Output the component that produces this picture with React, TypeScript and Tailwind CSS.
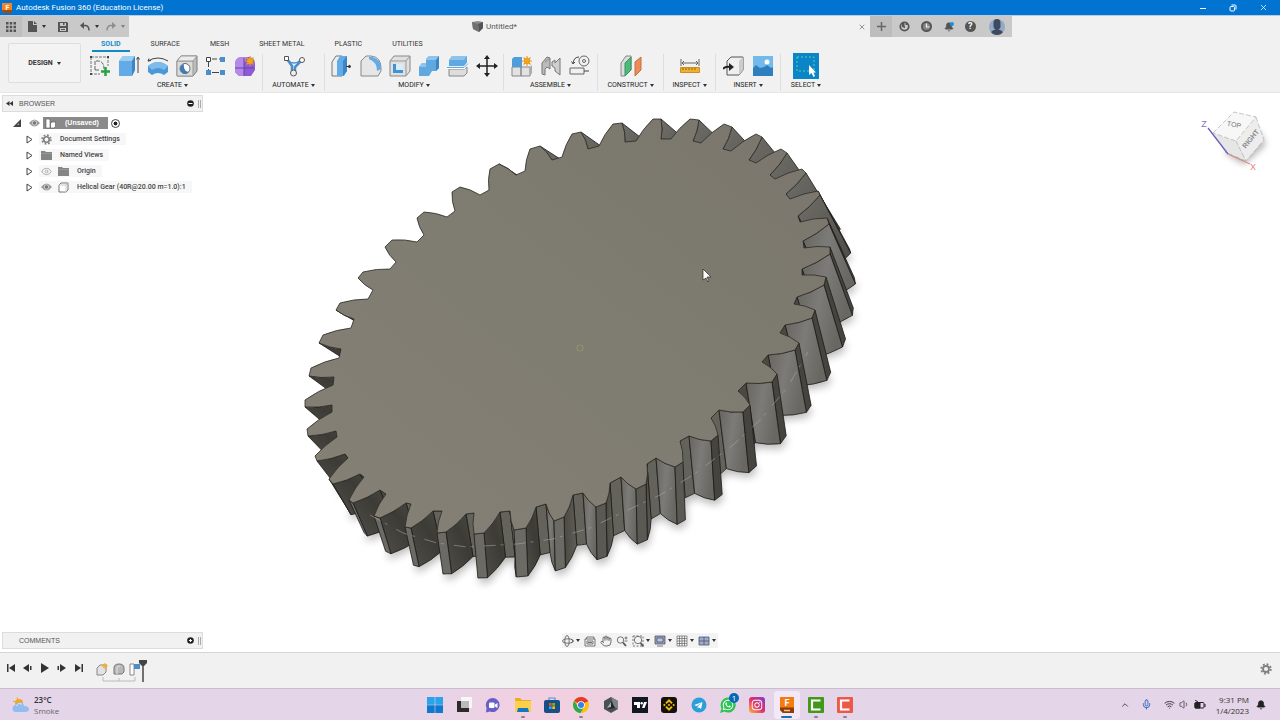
import type { ReactNode } from "react";
import { Bell, ChevronUp, Eye, Hand, Mic, Volume1, Wifi, X } from "lucide-react";
import { FaInstagram, FaTelegramPlane, FaWhatsapp } from "react-icons/fa";
import { SiBinance } from "react-icons/si";

type Pt = [number, number];

// Outline of the gear's top face, clockwise.
// Each tooth: tip start, tip end, root start, root end.
const TEETH: number[][] = [
  [319, 343, 323, 335, 351, 328, 354, 319],
  [336, 310, 340, 303, 368, 299, 373, 290],
  [358, 278, 363, 272, 390, 269, 396, 262],
  [385, 247, 392, 240, 417, 242, 424, 235],
  [417, 218, 424, 212, 447, 217, 455, 211],
  [452, 192, 460, 187, 480, 195, 489, 190],
  [490, 169, 499, 164, 516, 175, 525, 171],
  [530, 149, 540, 146, 552, 160, 562, 157],
  [572, 134, 581, 132, 588, 149, 599, 146],
  [613, 124, 622, 123, 625, 142, 636, 141],
  [653, 119, 661, 119, 661, 139, 671, 139],
  [690, 119, 699, 120, 693, 141, 701, 143],
  [724, 124, 732, 127, 723, 149, 731, 151],
  [756, 134, 762, 137, 749, 160, 756, 163],
  [781, 149, 787, 153, 770, 175, 775, 179],
  [802, 169, 806, 173, 786, 194, 790, 199],
  [818, 191, 820, 195, 798, 216, 800, 222],
  [827, 218, 829, 224, 803, 241, 804, 248],
  [830, 247, 830, 254, 802, 269, 802, 275],
  [826, 277, 824, 285, 797, 297, 794, 304],
  [815, 310, 812, 318, 785, 325, 780, 333],
  [799, 343, 795, 350, 768, 355, 762, 362],
  [777, 374, 772, 382, 746, 383, 738, 391],
  [750, 405, 743, 412, 719, 410, 711, 418],
  [718, 435, 711, 441, 689, 436, 680, 441],
  [683, 462, 675, 467, 656, 458, 647, 464],
  [646, 484, 636, 489, 621, 477, 610, 483],
  [606, 503, 596, 507, 583, 493, 573, 495],
  [564, 517, 554, 521, 546, 504, 536, 507],
  [526, 528, 514, 530, 510, 511, 500, 512],
  [484, 533, 474, 534, 474, 513, 466, 514],
  [446, 532, 437, 533, 442, 511, 433, 511],
  [411, 528, 405, 527, 411, 504, 406, 503],
  [380, 518, 374, 516, 386, 494, 380, 490],
  [353, 503, 349, 500, 364, 477, 360, 474],
  [333, 484, 329, 479, 348, 458, 345, 454],
  [317, 461, 315, 456, 337, 437, 336, 431],
  [308, 436, 307, 429, 332, 412, 332, 405],
  [305, 407, 305, 400, 333, 385, 334, 377],
  [309, 376, 311, 368, 339, 358, 341, 349],
];

// Where a point of the top face lands on the bottom face.
const lower = ([x, y]: Pt): Pt => [
  x + 100.2 - 0.053 * x - 0.1333 * y,
  y - 15.3 + 0.08 * x + 0.04 * y,
];

const at = ([x, y]: Pt) => `${x.toFixed(1)} ${y.toFixed(1)}`;

const KINDS = ["tip", "out", "root", "in"] as const;

const points: Pt[] = TEETH.flatMap((t) => [
  [t[0], t[1]] as Pt,
  [t[2], t[3]] as Pt,
  [t[4], t[5]] as Pt,
  [t[6], t[7]] as Pt,
]);

const edges = points.map((a, i) => {
  const b = points[(i + 1) % points.length];
  const kind = KINDS[i % 4];
  const dx = b[0] - a[0];
  const dy = b[1] - a[1];
  const len = Math.hypot(dx, dy) || 1;
  const bulge = kind === "in" || kind === "out" ? 2 : 0;
  const mid: Pt = [(a[0] + b[0]) / 2, (a[1] + b[1]) / 2];
  const ctrl: Pt = [mid[0] + (dy / len) * bulge, mid[1] - (dx / len) * bulge];
  const low = lower(mid);
  const facing = (low[0] - mid[0]) * dy - (low[1] - mid[1]) * dx;
  return { a, b, ctrl, kind, mid, facing };
});

const facePath =
  `M${at(edges[0].a)}` + edges.map((e) => `Q${at(e.ctrl)} ${at(e.b)}`).join("") + "Z";
const shadowPath =
  `M${at(lower(edges[0].a))}` + edges.map((e) => `L${at(lower(e.b))}`).join("") + "Z";

// far walls first
const walls = edges
  .filter((e) => e.facing > 0)
  .sort((p, q) => p.mid[0] * 0.27 + p.mid[1] * 0.96 - (q.mid[0] * 0.27 + q.mid[1] * 0.96));

function wallFill(kind: string, [x, y]: Pt) {
  if (kind === "in") return x > 560 ? "url(#flankMid)" : "url(#flankDark)";
  if (kind === "out") return y < 215 ? "url(#flankBack)" : "url(#flankLight)";
  if (kind === "tip") return x > 690 ? "#45443e" : x > 590 ? "#5a5953" : "#6b6a64";
  return x > 740 || x < 400 ? "#4b4a42" : "#63625b";
}

function Gear() {
  return (
    <svg
      viewBox="0 93 1280 559"
      className="absolute inset-0 h-full w-full"
      role="img"
      aria-label="Helical gear model"
    >
      <defs>
        <linearGradient id="flankDark" x1="0" y1="1" x2="1" y2="0">
          <stop offset="0" stopColor="#4f4e48" />
          <stop offset="0.6" stopColor="#3c3b35" />
          <stop offset="1" stopColor="#4a4942" />
        </linearGradient>
        <linearGradient id="flankMid" x1="0" y1="0" x2="1" y2="0">
          <stop offset="0" stopColor="#4a4942" />
          <stop offset="1" stopColor="#5e5d57" />
        </linearGradient>
        <linearGradient id="flankBack" x1="0" y1="0" x2="1" y2="1">
          <stop offset="0" stopColor="#6e6d67" />
          <stop offset="1" stopColor="#4b4a44" />
        </linearGradient>
        <linearGradient id="flankLight" x1="0" y1="0" x2="1" y2="0.3">
          <stop offset="0" stopColor="#666560" />
          <stop offset="0.5" stopColor="#7c7b77" />
          <stop offset="1" stopColor="#686762" />
        </linearGradient>
        <linearGradient id="face" x1="1" y1="0" x2="0" y2="1">
          <stop offset="0" stopColor="#7a766d" />
          <stop offset="0.5" stopColor="#7f7c71" />
          <stop offset="1" stopColor="#868075" />
        </linearGradient>
        <filter id="soft">
          <feGaussianBlur stdDeviation="4" />
        </filter>
      </defs>
      <path d={shadowPath} fill="#000" opacity="0.28" transform="translate(1 5)" filter="url(#soft)" />
      {walls.map(({ a, b, ctrl, kind, mid }, i) => (
        <path
          key={i}
          d={`M${at(a)}Q${at(ctrl)} ${at(b)}L${at(lower(b))}Q${at(lower(ctrl))} ${at(lower(a))}Z`}
          fill={wallFill(kind, mid)}
          stroke="#1c1b18"
          strokeWidth="0.8"
          strokeLinejoin="round"
        />
      ))}
      <path
        d="M370 515L403 533L437 543L467 547L517 544L553 539L590 528L613 517L660 495L693 475L733 445L760 420L787 388L808 352"
        fill="none"
        stroke="#b5b4aa"
        strokeWidth="0.7"
        strokeDasharray="12 5 3 10"
        opacity="0.7"
      />
      <path d={facePath} fill="url(#face)" stroke="#2a2925" strokeWidth="0.8" />
      <circle cx="580" cy="348" r="3" fill="none" stroke="#969067" strokeWidth="1.2" />
      <path d="M703 269v11l3-2 2 4 1-1-2-4h4z" fill="#fff" stroke="#222" strokeWidth="0.7" />
    </svg>
  );
}

function ViewCube() {
  return (
    <svg viewBox="0 0 72 72" className="mt-[10px] mr-2 h-[72px] w-[72px]" role="img" aria-label="View cube">
      <defs>
        <filter id="cubeSoft" x="-30%" y="-30%" width="160%" height="160%">
          <feGaussianBlur stdDeviation="3" />
        </filter>
      </defs>
      <path d="M24 50L44 62L66 42L60 28z" fill="#777" opacity="0.5" filter="url(#cubeSoft)" />
      <path d="M13 30L34 9L56 14L36 38z" fill="#f7f7f7" />
      <path d="M36 38L56 14L64 37L46 58z" fill="#ededed" />
      <path d="M13 30L36 38L46 58L25 49z" fill="#e6e6e6" />
      <path
        d="M13 30L34 9L56 14L36 38zM56 14L64 37L46 58L36 38M46 58L25 49"
        fill="none"
        stroke="#b0b0b0"
        strokeWidth="0.7"
        strokeDasharray="5 2"
      />
      <path d="M8 25L28 51" stroke="#6660bd" strokeWidth="1.3" />
      <path d="M28 51L50 61" stroke="#dc7d7d" strokeWidth="1" />
      <g fontFamily="Liberation Sans, sans-serif" textAnchor="middle">
        <text x="34" y="24" fontSize="7" fill="#777" transform="rotate(10 34 22)">TOP</text>
        <text x="51" y="38" fontSize="7" fontWeight="700" fill="#888" transform="rotate(-50 51 36)">RIGHT</text>
        <text x="4" y="24" fontSize="9" fill="#7a76c8">Z</text>
        <text x="53" y="67" fontSize="9" fill="#e77f86">X</text>
      </g>
    </svg>
  );
}

function ToolIcon({ children }: { children: ReactNode }) {
  return (
    <svg viewBox="0 0 22 22" className="h-[22px] w-[22px]" fill="none" aria-hidden="true">
      {children}
    </svg>
  );
}

const Burst = ({ x, y }: { x: number; y: number }) => (
  <g stroke="#e89b1c" strokeWidth="1.2">
    <path d={`M${x - 5} ${y}h10M${x} ${y - 5}v10M${x - 3.5} ${y - 3.5}l7 7M${x + 3.5} ${y - 3.5}l-7 7`} />
    <circle cx={x} cy={y} r="2.5" fill="#f4a71d" />
  </g>
);

const CREATE = [
  {
    name: "Create Sketch",
    art: (
      <>
        <path d="M2 2h17v9M2 2v17h9" stroke="#777" strokeDasharray="3 1" />
        <path d="M6 15V6h4q5 1 5 8M6 15h4" stroke="#666" strokeDasharray="4 1" />
        <path d="M1 1h2v2H1zM18 1h2v2h-2zM1 18h2v2H1z" fill="#444" />
        <path d="M16.5 12v9M12 16.5h9" stroke="#27a344" strokeWidth="2.5" />
      </>
    ),
  },
  {
    name: "Extrude",
    art: (
      <>
        <path d="M1 6l4-5h12v14l-3 6H1z" fill="#62abe6" />
        <path d="M1 6l4-5h12l-3 5z" fill="#9bcdf3" />
        <path d="M14 6l3-5v14l-3 6z" fill="#3c85c6" />
        <path d="M20 3v15M18.5 4.5L20 2l1.5 2.5" stroke="#444" />
      </>
    ),
  },
  {
    name: "Revolve",
    art: (
      <>
        <path d="M1 11q10-8 20 0v6l-4 3q-6-4-12 0l-4-3z" fill="#4a98d8" />
        <path d="M1 11q10-8 20 0l-4 4q-6-4-12 0z" fill="#7dbbea" />
        <path d="M1 6q10-6 20 0M1 6l3-.5M1 6l1-2.5" stroke="#444" />
      </>
    ),
  },
  {
    name: "Hole",
    art: (
      <>
        <path d="M1 6l4-5h16v15l-4 5H1z" fill="#bdbdbd" stroke="#7d7d7d" />
        <path d="M1 6h16v15H1z" fill="#dcdcdc" stroke="#999" />
        <path d="M1 6l4-5h16l-4 5z" fill="#ececec" stroke="#999" />
        <circle cx="9" cy="13.5" r="5" fill="#fff" stroke="#666" />
        <path d="M8 9a5 5 0 105 8q-6-1-5-8" fill="#3c7fb8" />
      </>
    ),
  },
  {
    name: "Pattern",
    art: (
      <>
        <path d="M7 4h8M3.5 7v8" stroke="#444" strokeDasharray="5 2" />
        <path d="M1.5 2.5h4v4h-4z" fill="#fff" stroke="#444" />
        <path d="M15 2h5v5h-5zM1 15h5v5H1zM15 15h5v5h-5z" fill="#4a8fc9" />
        <path d="M7 17.5h7" stroke="#444" />
      </>
    ),
  },
  {
    name: "Create Form",
    art: (
      <>
        <path d="M1 9q0-6 6-7h8q6 1 6 7v6l-4 6H5l-4-4z" fill="#8d5bd6" />
        <path d="M1 9q0-6 6-7h6l-3 6v13H5l-4-4z" fill="#b48ae8" />
        <path d="M10 3v18M1 13h19" stroke="#6c3fb0" />
        <Burst x={16} y={6} />
      </>
    ),
  },
];

const AUTOMATE = [
  {
    name: "Automate",
    art: (
      <>
        <path d="M4 4l5 7v5M18 6l-6 6v4" stroke="#4a8fc9" strokeWidth="2.5" />
        <path d="M4 5q7 6 14 0" stroke="#4a8fc9" strokeWidth="1.5" />
        <path d="M1.5 1.5h4v4h-4z" fill="#fff" stroke="#555" />
        <circle cx="19" cy="5" r="2.5" fill="#fff" stroke="#555" />
        <circle cx="10.5" cy="18" r="3" fill="#eee" stroke="#555" />
      </>
    ),
  },
];

const MODIFY = [
  {
    name: "Press Pull",
    art: (
      <>
        <path d="M1 7l4-6h6v20H1z" fill="#eee" stroke="#777" />
        <path d="M6 6l3-5h7v15l-3 5H6z" fill="#62abe6" />
        <path d="M12 6l4-5v15l-4 5z" fill="#3c85c6" />
        <path d="M15 11.5h4M18 10l2 1.5-2 1.5z" stroke="#333" />
      </>
    ),
  },
  {
    name: "Fillet",
    art: (
      <>
        <path d="M1 6l5-5h5q10 1 10 12v3l-3 5H1z" fill="#e6e6e6" stroke="#888" />
        <path d="M9 2h3q9 2 9 12l-4 2Q17 7 9 4z" fill="#62abe6" />
      </>
    ),
  },
  {
    name: "Shell",
    art: (
      <>
        <path d="M1 6l4-5h16v15l-4 5H1z" fill="#e0e0e0" stroke="#888" />
        <path d="M1 6h16v15M17 6l4-5" stroke="#999" />
        <path d="M4 9h10v9H4z" fill="#3f93d6" />
        <path d="M7 9h7v6H7z" fill="#d9ecfa" />
      </>
    ),
  },
  {
    name: "Combine",
    art: (
      <>
        <path d="M8 4l3-3h10v12l-3 3h-4l-3 5H1v-9l3-4h4z" fill="#5fa8e0" />
        <path d="M8 4l3-3h10l-3 4H8zM1 12l3-4h4v4z" fill="#8cc4ee" />
        <path d="M18 5l3-4v12l-3 3z" fill="#3c85c6" />
      </>
    ),
  },
  {
    name: "Split Body",
    art: (
      <>
        <path d="M2 5l3-4h15v7l-3 3H2z" fill="#5fa8e0" />
        <path d="M2 5l3-4h15l-3 4z" fill="#8cc4ee" />
        <path d="M2 14h15l3-2v6l-3 3H2z" fill="#ddd" stroke="#888" />
        <path d="M0 13h17l4-5" stroke="#fff" strokeWidth="2" />
        <path d="M0 12.5h17l4-4" stroke="#5fa8e0" />
      </>
    ),
  },
  {
    name: "Move",
    art: (
      <>
        <path d="M11 3v16M3 11h16" stroke="#222" strokeWidth="1.5" />
        <path d="M11 0l3 4H8zM11 22l3-4H8zM0 11l4-3v6zM22 11l-4-3v6z" fill="#222" />
      </>
    ),
  },
];

const ASSEMBLE = [
  {
    name: "New Component",
    art: (
      <>
        <path d="M1 12h9v9H1zM10 12h9v9h-9z" fill="#e2e2e2" stroke="#888" />
        <path d="M1 4l2-2h8v10H1z" fill="#4f9ddb" />
        <path d="M19 12l2-2v8l-2 3z" fill="#aaa" />
        <Burst x={16} y={6} />
      </>
    ),
  },
  {
    name: "Joint",
    art: (
      <>
        <path d="M2 8l5-6 3 1v11l-3-2-2 2v6l-3-1z" fill="#bbb" stroke="#777" />
        <path d="M5 7l5-4" stroke="#888" />
        <path d="M12 7l3-2v3l5-5v17l-5-4v-3l-3-2z" fill="#cfcfcf" stroke="#777" />
      </>
    ),
  },
  {
    name: "Motion Link",
    art: (
      <>
        <path d="M1 13h14v6H1z" stroke="#666" />
        <circle cx="15" cy="6" r="5" stroke="#666" />
        <circle cx="15" cy="6" r="1.5" stroke="#666" />
        <path d="M15 16h5M10 2Q5 2 4 8M2.5 6.5L4 9l2-2" stroke="#444" />
      </>
    ),
  },
];

const CONSTRUCT = [
  {
    name: "Offset Plane",
    art: (
      <>
        <path d="M1 8l5-7h5v14l-6 6H1z" fill="#ddd" stroke="#888" />
        <path d="M5 8l6-6v13l-6 6z" fill="#4cba7b" stroke="#3a9161" />
        <path d="M15 7l6-5v13l-6 6z" fill="#ec8a5a" stroke="#c86f42" />
      </>
    ),
  },
];

const INSPECT = [
  {
    name: "Measure",
    art: (
      <>
        <path d="M2 4v7M20 4v7M3 8h16M5 6L3 8l2 2M17 6l2 2-2 2" stroke="#666" />
        <path d="M1.5 12.5h19v5h-19z" fill="#f0b02e" stroke="#c98f22" />
        <path d="M4 13v2M7 13v2M10 13v2M13 13v2M16 13v2" stroke="#8d6418" />
      </>
    ),
  },
];

const INSERT = [
  {
    name: "Insert Derive",
    art: (
      <>
        <path d="M4 6l4-4h12v13l-4 5H4z" fill="#efefef" stroke="#555" />
        <path d="M16 6l4-4v13l-4 5z" fill="#ccc" />
        <path d="M0 14q2-3 7-2" stroke="#222" strokeWidth="2" />
        <path d="M6 8l5 4-5 4z" fill="#222" />
      </>
    ),
  },
  {
    name: "Canvas",
    art: (
      <>
        <path d="M1 1h20v20H1z" fill="#74b9ec" />
        <path d="M1 13l3-3 4 3 4-1 3-2 4 3 2-1v9H1z" fill="#2f7fbe" />
        <circle cx="15" cy="7" r="2.5" fill="#fff" />
      </>
    ),
  },
];

const GROUPS = [
  { label: "CREATE", tools: CREATE, width: "w-[180px]" },
  { label: "AUTOMATE", tools: AUTOMATE, width: "w-[62px]" },
  { label: "MODIFY", tools: MODIFY, width: "w-[179px]" },
  { label: "ASSEMBLE", tools: ASSEMBLE, width: "w-[94px]" },
  { label: "CONSTRUCT", tools: CONSTRUCT, width: "w-[66px]" },
  { label: "INSPECT", tools: INSPECT, width: "w-[52px]" },
  { label: "INSERT", tools: INSERT, width: "w-[65px]" },
];

const TABS = ["SOLID", "SURFACE", "MESH", "SHEET METAL", "PLASTIC", "UTILITIES"];

const Caret = () => (
  <svg viewBox="0 0 4 3" className="h-[3px] w-1 shrink-0" aria-hidden="true">
    <path d="M0 0h4L2 3z" fill="#333" />
  </svg>
);

function Cog({ className }: { className: string }) {
  return (
    <svg viewBox="0 0 12 12" className={className} fill="none" stroke="#808080" aria-hidden="true">
      <circle cx="6" cy="6" r="3" strokeWidth="1.8" />
      <circle cx="6" cy="6" r="4.8" strokeWidth="1.8" strokeDasharray="1.9 1.87" />
    </svg>
  );
}

function TitleBar() {
  return (
    <header className="flex h-[15px] items-center justify-between bg-[#0074d0] pr-3 pl-[2px] text-white">
      <div className="flex items-center gap-1">
        <svg viewBox="0 0 10 12" className="h-3 w-[10px]" aria-hidden="true">
          <path d="M0 1h10v10H2L0 9z" fill="#f58220" />
          <path d="M0 8h10v3H2L0 9z" fill="#a44a0c" />
          <text x="5.5" y="7.5" fontSize="7" fontWeight="700" fill="#fff" textAnchor="middle" fontFamily="Roboto, sans-serif">F</text>
        </svg>
        <h1 className="text-[8px] leading-3 font-normal">
          Autodesk Fusion 360 (Education License)
        </h1>
      </div>
      <div className="flex items-center gap-[22px]">
        <button aria-label="Minimize">
          <svg viewBox="0 0 8 8" className="h-2 w-2"><path d="M1 4.5h6" stroke="#fff" /></svg>
        </button>
        <button aria-label="Restore">
          <svg viewBox="0 0 8 8" className="h-2 w-2" fill="none" stroke="#fff">
            <rect x="1" y="2.5" width="4.5" height="4.5" rx="1" />
            <path d="M2.5 1H6q1 0 1 1v3.5" />
          </svg>
        </button>
        <button aria-label="Close"><X size={9} /></button>
      </div>
    </header>
  );
}

function DocumentBar() {
  return (
    <div className="flex h-[22px] border-t border-[#b5cce2]">
      <div className="flex w-[129px] items-center bg-[#c9c9c9] text-[#555]">
        <button className="grid h-full w-[22px] place-items-center bg-[#bfbfbf]" aria-label="Data Panel">
          <svg viewBox="0 0 10 10" className="h-[10px] w-[10px]" fill="#555">
            <path d="M0 0h2.5v2.5H0zM3.7 0h2.5v2.5H3.7zM7.5 0H10v2.5H7.5zM0 3.7h2.5v2.5H0zM3.7 3.7h2.5v2.5H3.7zM7.5 3.7H10v2.5H7.5zM0 7.5h2.5V10H0zM3.7 7.5h2.5V10H3.7zM7.5 7.5H10V10H7.5z" />
          </svg>
        </button>
        <button className="ml-[6px] flex items-center gap-[5px]" aria-label="File">
          <svg viewBox="0 0 9 11" className="h-[11px] w-[9px]" fill="#555">
            <path d="M0 0h5v4h4v7H0zM6 0l3 3H6z" />
          </svg>
          <Caret />
        </button>
        <button className="ml-3" aria-label="Save">
          <svg viewBox="0 0 10 10" className="h-[10px] w-[10px]">
            <path d="M0 0h9l1 1v9H0z" fill="#555" />
            <path d="M2 1h6v3H2zM2 6h6v3H2z" fill="#c9c9c9" />
            <path d="M5 1h1.5v2H5zM3 7h4v1H3z" fill="#555" />
          </svg>
        </button>
        <button className="ml-3 flex items-center gap-[5px]" aria-label="Undo">
          <svg viewBox="0 0 10 9" className="h-[9px] w-[10px]">
            <path d="M3 3.5h2q4 0 4 5" fill="none" stroke="#555" strokeWidth="1.5" />
            <path d="M4 0v7L0 3.5z" fill="#555" />
          </svg>
          <Caret />
        </button>
        <button className="ml-[7px] flex items-center gap-[5px] opacity-50" aria-label="Redo">
          <svg viewBox="0 0 10 9" className="h-[9px] w-[10px]">
            <path d="M7 3.5H5q-4 0-4 5" fill="none" stroke="#555" strokeWidth="1.5" />
            <path d="M6 0v7l4-3.5z" fill="#555" />
          </svg>
          <Caret />
        </button>
      </div>
      <div className="flex w-[741px] items-center pr-1 pl-[343px]">
        <svg viewBox="0 0 12 11" className="h-[11px] w-3" aria-hidden="true">
          <path d="M0 1l6-1 5 1v6l-4 4-6-3z" fill="#8a8a8a" />
          <path d="M6 3l5-2v6l-4 4z" fill="#555" />
          <path d="M0 1l6 2 1 8-6-3z" fill="#707070" />
        </svg>
        <span className="ml-[2px] text-[8px] leading-3 text-[#555]">Untitled*</span>
        <button className="ml-auto" aria-label="Close document">
          <X size={8} color="#666" />
        </button>
      </div>
      <div className="flex w-[142px] items-center bg-[#c9c9c9]">
        <button className="grid h-full w-[22px] place-items-center bg-[#bdbdbd]" aria-label="New tab">
          <svg viewBox="0 0 9 9" className="h-[9px] w-[9px]"><path d="M4.5 0v9M0 4.5h9" stroke="#666" strokeWidth="1.5" /></svg>
        </button>
        <div className="flex flex-1 items-center justify-between px-[7px]">
          <button aria-label="Extensions">
            <svg viewBox="0 0 11 11" className="h-[11px] w-[11px]" fill="none" stroke="#555">
              <circle cx="5.5" cy="5.5" r="4.2" strokeWidth="1.8" />
              <path d="M3 2v4l3 1V4h3L8 2z" fill="#555" stroke="none" />
              <path d="M6 2v3h3" stroke="#c9c9c9" />
            </svg>
          </button>
          <button aria-label="Job Status">
            <svg viewBox="0 0 11 11" className="h-[11px] w-[11px]" fill="none">
              <circle cx="5.5" cy="5.5" r="4.5" fill="#888" stroke="#555" strokeWidth="2" />
              <path d="M5.5 2.5V6h3" stroke="#eee" strokeWidth="1.2" />
            </svg>
          </button>
          <button className="relative" aria-label="Notifications">
            <Bell size={10} fill="#555" color="#555" />
            <span className="absolute top-0 right-0 h-1 w-1 rounded-full bg-[#1d8fe0]" />
          </button>
          <button aria-label="Help" className="grid h-[11px] w-[11px] place-items-center rounded-full bg-[#555] text-[9px] leading-none font-bold text-white">
            ?
          </button>
          <button aria-label="Account" className="ml-[2px]">
            <svg viewBox="0 0 16 16" className="h-4 w-4">
              <circle cx="8" cy="8" r="8" fill="#93a9c6" />
              <path d="M4.5 4Q4.5 0 8 0t3.5 4v4q-1 3-3.5 3T4.5 8zM2 13q3-3 6-2 3-1 6 2-2 3-6 3t-6-3z" fill="#3d4b61" />
            </svg>
          </button>
        </div>
      </div>
    </div>
  );
}

function Toolbar() {
  return (
    <div className="flex h-14 border-b border-[#e6e6e6] pl-2">
      <button className="mt-[6px] flex h-10 w-[73px] items-center justify-center gap-1 rounded-[2px] border border-[#dedede] bg-[#f3f3f3] text-[7px] leading-none font-bold">
        DESIGN <Caret />
      </button>
      <div className="ml-[2px]">
        <nav className="ml-[9px] flex h-[15px] gap-3" aria-label="Workspace tabs">
          {TABS.map((tab, i) => (
            <button
              key={tab}
              className={
                i === 0
                  ? "border-b-2 border-[#1389c6] px-[9px] text-[7px] leading-[14px] font-bold text-[#1389c6]"
                  : "border-b-2 border-transparent px-[9px] text-[7px] leading-[14px] text-[#333]"
              }
            >
              {tab}
            </button>
          ))}
        </nav>
        <div className="mt-[2px] flex">
          {GROUPS.map((g) => (
            <section key={g.label} className={`${g.width} border-r border-[#dedede] pb-px`}>
              <div className="flex h-6 items-center justify-center gap-[7px]">
                {g.tools.map((t) => (
                  <button key={t.name} aria-label={t.name}>
                    <ToolIcon>{t.art}</ToolIcon>
                  </button>
                ))}
              </div>
              <button className="mx-auto mt-[2px] flex items-center gap-[2px] text-[7px] leading-[10px] text-[#222]">
                {g.label} <Caret />
              </button>
            </section>
          ))}
          <section className="w-[50px]">
            <button aria-label="Select" className="mx-auto -mt-px grid h-[26px] w-[26px] place-items-center bg-[#0a86c8]">
              <ToolIcon>
                <path d="M2 2h17v14H2z" stroke="#58d0a9" strokeDasharray="2 2" />
                <path d="M14 10v10l2.5-2 2 4 1.5-1-1.5-3.5H21z" fill="#fff" />
              </ToolIcon>
            </button>
            <button className="mx-auto mt-px flex items-center gap-[2px] text-[7px] leading-[10px] text-[#222]">
              SELECT <Caret />
            </button>
          </section>
        </div>
      </div>
    </div>
  );
}

const Folder = () => (
  <svg viewBox="0 0 11 9" className="h-[9px] w-[11px]" fill="#858585" aria-hidden="true">
    <path d="M0 0h4l1 1h6v8H0z" />
    <path d="M0 2.5h11" stroke="#aaa" strokeWidth="0.5" />
  </svg>
);

const Shown = () => (
  <svg viewBox="0 0 11 8" className="h-2 w-[11px]" aria-hidden="true">
    <path d="M0 4q5.5-7 11 0-5.500 7-11 0z" fill="#999" />
    <circle cx="5.5" cy="4" r="2.2" fill="#777" stroke="#eee" strokeWidth="0.7" />
  </svg>
);

const Body = () => (
  <svg viewBox="0 0 11 11" className="h-[11px] w-[11px]" fill="#fff" stroke="#555" strokeWidth="0.8" aria-hidden="true">
    <path d="M1 3l2-2h7v7L8 10H1z" strokeLinejoin="round" />
    <path d="M1 3h7v7M8 3l2-2" stroke="#bbb" />
  </svg>
);

const NODES = [
  { label: "Document Settings", icons: [<Cog key="c" className="h-[11px] w-[11px]" />] },
  { label: "Named Views", icons: [<Folder key="f" />] },
  { label: "Origin", icons: [<Eye key="e" size={11} color="#aaa" />, <Folder key="f" />] },
  { label: "Helical Gear (40R@20.00 m=1.0):1", icons: [<Shown key="e" />, <Body key="b" />] },
];

function PanelHeader({ title, open }: { title: string; open: boolean }) {
  return (
    <div className="flex h-[17px] w-[201px] items-center border border-[#dcdcdc] bg-[#f1f1f1] pr-[1px] pl-[3px]">
      <div className="w-[13px]">
        {open && (
          <svg viewBox="0 0 7 5" className="h-[5px] w-[7px]" fill="#333" aria-hidden="true">
            <path d="M3.5 0v5L0 2.5zM7 0v5L3.5 2.5z" />
          </svg>
        )}
      </div>
      <h2 className="font-['Liberation_Sans',sans-serif] text-[7px] leading-3 text-[#555]">{title}</h2>
      <button aria-label={`Toggle ${title.toLowerCase()}`} className="mr-1 ml-auto">
        <svg viewBox="0 0 7 7" className="h-[7px] w-[7px]">
          <circle cx="3.5" cy="3.5" r="3.3" fill="#222" />
          <path d={open ? "M1.5 3.5h4" : "M2 3.5h3M3.5 2v3"} stroke="#fff" />
        </svg>
      </button>
      <span className="h-2 w-[3px] border-x border-[#aaa]" />
    </div>
  );
}

function Browser() {
  return (
    <aside className="mt-[2px] ml-[2px]">
      <PanelHeader title="BROWSER" open />
      <ul className="mt-[3px] text-[7px] leading-4 font-medium text-[#444]">
        <li className="flex h-4 items-center pl-[11px]">
          <svg viewBox="0 0 8 8" className="h-2 w-2" aria-hidden="true">
            <path d="M8 0v8H0z" fill="#444" />
            <path d="M6 4v2H4z" fill="#aaa" />
          </svg>
          <span className="ml-2">
            <Shown />
          </span>
          <button className="ml-[3px] flex h-3 w-[65px] items-center bg-[#8a8a8a] pl-[2px] font-['Liberation_Sans',sans-serif] font-bold text-white">
            <svg viewBox="0 0 11 11" className="h-[11px] w-[11px]" fill="#fff" stroke="#555" strokeWidth="0.6" aria-hidden="true">
              <path d="M1 1h3l1 1v8H1zM5.5 5.5L7 4h3.5v4.5L9 10H5.5z" />
            </svg>
            <span className="ml-[9px]">(Unsaved)</span>
          </button>
          <input
            type="radio"
            defaultChecked
            name="active-component"
            aria-label="Activate (Unsaved)"
            className="ml-[3px] h-[9px] w-[9px] appearance-none rounded-full border border-[#444] bg-[radial-gradient(#222_35%,#fff_45%)]"
          />
        </li>
        {NODES.map((n) => (
          <li key={n.label} className="flex h-4 items-center pl-6">
            <button aria-label={`Expand ${n.label}`}>
              <svg viewBox="0 0 7 9" className="h-[9px] w-[7px]" fill="none" stroke="#444">
                <path d="M1 1v7l5-3.5z" />
              </svg>
            </button>
            <span className="ml-[6px] flex h-3 items-center gap-[6px] bg-[#f7f7f7] pr-[6px] pl-[2px]">
              {n.icons}
              <span className="ml-[2px]">{n.label}</span>
            </span>
          </li>
        ))}
      </ul>
    </aside>
  );
}

const NAV = [
  {
    name: "Orbit",
    menu: true,
    art: (
      <>
        <ellipse cx="6" cy="6" rx="5.5" ry="2.2" />
        <ellipse cx="5" cy="6" rx="2.2" ry="5.5" />
        <path d="M9 4l2 2-2 2" />
      </>
    ),
  },
  { name: "Look At", menu: false, art: <path d="M1 4h10v7H1zM2 4l1-2h7v2M3 6h6v3H3zM4 7.5h4" /> },
  { name: "Pan", menu: false, art: null },
  {
    name: "Zoom",
    menu: false,
    art: (
      <>
        <circle cx="4.5" cy="5" r="3.2" />
        <path d="M7 7.5l3 3.5" strokeWidth="1.8" />
        <path d="M8.5 3h3M10 1.5v3M8.5 6h3" />
      </>
    ),
  },
  {
    name: "Fit",
    menu: true,
    art: (
      <>
        <path d="M1 1h10v10H1z" strokeDasharray="2 1.5" />
        <circle cx="6" cy="5" r="3.7" fill="#f3f3f3" />
        <path d="M8.5 8l3 3.5" strokeWidth="1.8" />
      </>
    ),
  },
  {
    name: "Display Settings",
    menu: true,
    art: (
      <>
        <path d="M1 1h10v8H1z" fill="#8fa0cf" />
        <path d="M3 3h6v4H3z" fill="#b8c6ea" />
        <path d="M3 11h6" />
      </>
    ),
  },
  {
    name: "Grid and Snaps",
    menu: true,
    art: <path d="M1 1h10v10H1zM3.5 1v10M6 1v10M8.5 1v10M1 3.5h10M1 6h10M1 8.5h10" strokeWidth="0.6" />,
  },
  {
    name: "Viewports",
    menu: true,
    art: (
      <>
        <path d="M1 2h10v8H1z" fill="#9aa9dc" />
        <path d="M6 2v8M1 6h10" />
      </>
    ),
  },
];

function NavBar() {
  return (
    <div className="flex h-[15px] w-[156px] items-center justify-between bg-[#f3f3f3] pr-[2px]">
      {NAV.map((n) => (
        <button key={n.name} aria-label={n.name} className="flex items-center gap-[2px]">
          {n.art ? (
            <svg viewBox="0 0 12 12" className="h-3 w-3" fill="none" stroke="#555" strokeWidth="0.8">
              {n.art}
            </svg>
          ) : (
            <Hand size={12} color="#444" strokeWidth={1.5} />
          )}
          {n.menu && <Caret />}
        </button>
      ))}
    </div>
  );
}

function Viewport() {
  return (
    <main className="relative flex flex-1 flex-col justify-between bg-white">
      <Gear />
      <div className="relative flex items-start justify-between">
        <Browser />
        <ViewCube />
      </div>
      <div className="relative mb-[3px] grid grid-cols-[1fr_auto_1fr] items-center">
        <div className="pl-[2px]">
          <PanelHeader title="COMMENTS" open={false} />
        </div>
        <NavBar />
      </div>
    </main>
  );
}

const PLAYBACK = [
  { name: "Go to start", d: "M1 1h1.5v8H1zM9 1v8L3 5z" },
  { name: "Step back", d: "M6 1v8L0 5zM7 3h1.5v4H7z" },
  { name: "Play", d: "M1 0v10l8-5z" },
  { name: "Step forward", d: "M3 1v8l6-4zM.5 3H2v4H.5z" },
  { name: "Go to end", d: "M7.5 1H9v8H7.500zM1 1v8l6-4z" },
];

function Timeline() {
  return (
    <div className="flex h-9 items-start justify-between border-t border-[#d6d6d6] pt-[6px] pr-2 pl-[6px]">
      <div className="flex">
        <div className="mt-1 flex items-start gap-[7px]">
          {PLAYBACK.map((p) => (
            <button key={p.name} aria-label={p.name}>
              <svg viewBox="0 0 10 10" className="h-[10px] w-[10px]" fill="#333"><path d={p.d} /></svg>
            </button>
          ))}
        </div>
        <svg viewBox="0 0 54 24" className="ml-[12px] h-6 w-[54px]" fill="none" role="img" aria-label="Feature history">
          <path d="M1 9l3-3h6v7l-3 3H1z" fill="#e2e2e2" stroke="#888" />
          <path d="M6 7h6M9 4v6M7 5l4 4M11 5L7 9" stroke="#efb021" />
          <path d="M18 15V9q0-4 5-4t5 4v4l-2 2z" fill="#b8b8b8" stroke="#777" />
          <path d="M21 15V9q0-2 3-2" stroke="#e3e3e3" />
          <path d="M34 16V5h4v11z" fill="#fff" stroke="#888" />
          <path d="M38 5h6v5h-6z" fill="#4a8fc9" />
          <path d="M43 1h8v3l-3 3h-2l-3-3z" fill="#444" />
          <path d="M47 5v18" stroke="#444" strokeWidth="1.5" />
          <path d="M7 18v4h32v-4M23 22v-3" stroke="#bbb" />
        </svg>
      </div>
      <button aria-label="Timeline settings" className="mt-1">
        <Cog className="h-3 w-3" />
      </button>
    </div>
  );
}

const APPS: { name: string; art: ReactNode; state?: "open" | "active" }[] = [
  {
    name: "Start",
    art: (
      <>
        <path d="M0 0h7.7v7.7H0zM8.3 0H16v7.7H8.3z" fill="#2aa3ea" />
        <path d="M0 8.3h7.7V16H0zM8.3 8.3H16V16H8.3z" fill="#0f78cf" />
      </>
    ),
  },
  {
    name: "Task View",
    art: (
      <>
        <path d="M5 0h11v11H5z" fill="#f7f7f7" />
        <path d="M1 4h12v11H1z" fill="#2b2b2b" />
        <path d="M5 4h8v7H5z" fill="#bbb" />
      </>
    ),
  },
  {
    name: "Chat",
    art: (
      <>
        <path d="M8 1a7 7 0 11-3 13.5l-4 1L1.5 11A7 7 0 018 1z" fill="#6b5fc7" />
        <rect x="4" y="5.5" width="5.5" height="5.5" rx="1" fill="#fff" />
        <path d="M10 7.5L12.5 6v5L10 9.5z" fill="#fff" />
      </>
    ),
  },
  {
    name: "File Explorer",
    state: "open",
    art: (
      <>
        <path d="M0 1h5l2 2h9v12H0z" fill="#e8b021" />
        <path d="M0 4h16v11H0z" fill="#fbd04b" />
        <path d="M3 11h10l1 4H2z" fill="#1677be" />
      </>
    ),
  },
  {
    name: "Microsoft Store",
    art: (
      <>
        <path d="M5 4V1h6v3" fill="none" stroke="#3aa0de" strokeWidth="1.2" />
        <rect y="3" width="16" height="13" rx="2" fill="#174f86" />
        <path d="M5 6h2.7v2.7H5z" fill="#f25022" />
        <path d="M8.3 6H11v2.7H8.3z" fill="#7fba00" />
        <path d="M5 9.3h2.7V12H5z" fill="#29a8ea" />
        <path d="M8.3 9.3H11V12H8.3z" fill="#ffb900" />
      </>
    ),
  },
  {
    name: "Chrome",
    state: "open",
    art: (
      <>
        <circle cx="8" cy="8" r="8" fill="#fbc016" />
        <path d="M8 8L1.1 4A8 8 0 0115 4z" fill="#e33b2e" />
        <path d="M8 8H4L1.1 4a8 8 0 006.4 12L11 9.7z" fill="#2da94f" />
        <path d="M8 4h7" stroke="#e33b2e" />
        <circle cx="8" cy="8" r="3.8" fill="#fff" />
        <circle cx="8" cy="8" r="3" fill="#3b7de9" />
      </>
    ),
  },
  {
    name: "Inventor",
    art: (
      <>
        <path d="M8 0l7 4v8l-7 4-7-4V4z" fill="#4b5054" />
        <path d="M8 0l7 4v8l-4-2z" fill="#7c8286" />
        <path d="M8 4l4 7-7 1z" fill="#23272a" />
        <path d="M4 11l4-6v5z" fill="#a9b1b5" />
      </>
    ),
  },
  {
    name: "TradingView",
    art: (
      <>
        <path d="M0 0h16v16H0z" fill="#131722" />
        <path d="M2 5h6v6H5V8H2zM12 5h3l-2.5 6H10z" fill="#fff" />
        <circle cx="9.7" cy="6.2" r="1.2" fill="#fff" />
      </>
    ),
  },
  {
    name: "Binance",
    art: (
      <>
        <rect width="16" height="16" rx="3" fill="#14120b" />
        <SiBinance x="2" y="2" size={12} color="#f0b90b" />
      </>
    ),
  },
  {
    name: "Telegram",
    art: (
      <>
        <circle cx="8" cy="8" r="7.5" fill="#2b9fd9" />
        <FaTelegramPlane x="3" y="4" size={9} color="#fff" />
      </>
    ),
  },
  {
    name: "WhatsApp",
    art: (
      <>
        <path d="M8 .5A7.5 7.5 0 114.500 14.500L0 16l1.500-4.500A7.500 7.500 0 018 .5z" fill="#2cc352" />
        <FaWhatsapp x="2" y="2" size={12} color="#fff" />
      </>
    ),
  },
  {
    name: "Instagram",
    art: (
      <>
        <defs>
          <linearGradient id="insta" x1="0" y1="1" x2="1" y2="0">
            <stop offset="0" stopColor="#fdb73a" />
            <stop offset="0.5" stopColor="#e02f6e" />
            <stop offset="1" stopColor="#7b3fd0" />
          </linearGradient>
        </defs>
        <rect width="16" height="16" rx="3" fill="url(#insta)" />
        <FaInstagram x="2" y="2" size={12} color="#fff" />
      </>
    ),
  },
  {
    name: "Fusion 360",
    state: "active",
    art: (
      <>
        <path d="M1 0h14v16H4l-3-3z" fill="#f47b12" />
        <path d="M1 10.5h14V16H4l-3-3z" fill="#8e3d06" />
        <text x="8" y="9" fontSize="9" fontWeight="700" fill="#fff" textAnchor="middle" fontFamily="Roboto, sans-serif">F</text>
        <path d="M5 13.5h6" stroke="#f9c79c" strokeWidth="1.5" />
      </>
    ),
  },
  {
    name: "Camtasia",
    state: "open",
    art: (
      <>
        <rect width="16" height="16" rx="1" fill="#43981a" />
        <path d="M12.5 3.5H4v9h8.5" fill="none" stroke="#fff" strokeWidth="2.2" />
      </>
    ),
  },
  {
    name: "Camtasia Recorder",
    state: "open",
    art: (
      <>
        <rect width="16" height="16" rx="1" fill="#ee5846" />
        <path d="M12.5 3.5H4v9h8.5" fill="none" stroke="#fff" strokeWidth="2.2" />
      </>
    ),
  },
];

function Taskbar() {
  return (
    <footer className="grid h-8 grid-cols-[1fr_auto_1fr] items-center border-t border-[#c9bccd] bg-[linear-gradient(90deg,#e4d5e9_0%,#e4d5e9_32%,#f3cfe0_42%,#ecd2e2_50%,#e4d5e9_60%,#e4d5e9_100%)] font-['Open_Sans',sans-serif] text-[8px] leading-[11px] text-[#333]">
      <button className="flex items-center gap-[5px] pl-3 text-left" aria-label="Weather">
        <svg viewBox="0 0 17 16" className="h-4 w-[17px]">
          <circle cx="7" cy="6" r="4" fill="#f2a62a" />
          <path d="M5 0l1 3M1 4l3 1" stroke="#f2a62a" />
          <path d="M4 15a3.5 3.5 0 010-7q2-4 6-2 2 1 2 3 5 0 5 3t-4 3z" fill="#93bdf0" />
          <path d="M4 9q2-4 6-2" stroke="#d4e6fb" fill="none" />
        </svg>
        <span>
          <span className="block font-semibold">23°C</span>
          <span className="block text-[#666]">Smoke</span>
        </span>
      </button>
      <div className="flex w-[433px] justify-between">
        {APPS.map((app) => (
          <button
            key={app.name}
            aria-label={app.name}
            className={
              app.state === "active"
                ? "relative -mx-[2px] grid h-7 w-[26px] place-items-center rounded-[3px] bg-[#f3e8f5]"
                : "relative grid h-7 w-[22px] place-items-center"
            }
          >
            <svg viewBox="0 0 16 16" className="h-4 w-4">
              {app.art}
            </svg>
            {app.name === "WhatsApp" && (
              <span className="absolute top-[2px] right-0 grid h-[10px] w-[10px] place-items-center rounded-full bg-[#0967b8] text-[8px] leading-none text-white">
                1
              </span>
            )}
            {app.state === "open" && <span className="absolute bottom-px h-[2px] w-1 rounded-full bg-[#8b8390]" />}
            {app.state === "active" && <span className="absolute bottom-px h-[2px] w-[11px] rounded-full bg-[#1670b8]" />}
          </button>
        ))}
      </div>
      <div className="flex items-center justify-end pr-[14px]">
        <button aria-label="Show hidden icons"><ChevronUp size={10} color="#333" /></button>
        <Mic size={11} color="#2c62b8" className="ml-[11px]" />
        <button aria-label="Network, sound and battery" className="ml-3 flex items-center gap-1">
          <Wifi size={11} color="#333" />
          <Volume1 size={11} color="#555" />
          <svg viewBox="0 0 12 9" className="h-[9px] w-3" fill="none">
            <rect x="1" y="2.5" width="9" height="5.5" rx="1" stroke="#222" />
            <path d="M1 3h5v5H1zM1 0l3 2M11 4v3" fill="#222" stroke="#222" />
          </svg>
        </button>
        <time className="ml-[10px] text-right">
          <span className="block">9:31 PM</span>
          <span className="block">1/4/2023</span>
        </time>
        <button aria-label="Focus assist" className="ml-[7px]">
          <Bell size={10} fill="#222" color="#222" />
        </button>
      </div>
    </footer>
  );
}

export default function App() {
  return (
    <div className="flex min-h-screen flex-col overflow-hidden bg-[#f1f1f1] font-['Roboto',sans-serif] text-[#333]">
      <TitleBar />
      <DocumentBar />
      <Toolbar />
      <Viewport />
      <Timeline />
      <Taskbar />
    </div>
  );
}
